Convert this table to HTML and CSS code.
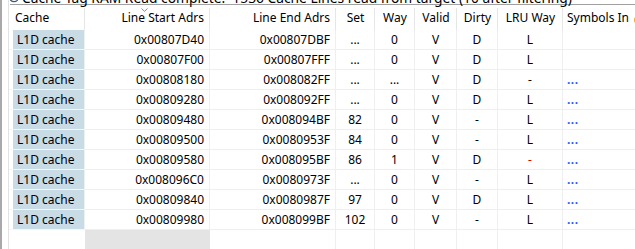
FILE: index.html
```html
<!DOCTYPE html>
<html>
<head>
<meta charset="utf-8">
<link rel="stylesheet" href="styles.css">
</head>
<body>
<div class="window">
  <div class="panel">
    <div class="msg">
      <svg class="msg-icon" width="10" height="15" viewBox="0 0 10 15"><circle cx="4" cy="8" r="4.6" fill="none" stroke="#3b5875" stroke-width="1.3"/></svg>
      <span class="msg-text">Cache Tag RAM Read complete.  1536 Cache Lines read from target (10 after filtering)</span>
    </div>
    <div class="grid">
      <div class="h left">Cache</div>
      <div class="h right sorted">Line Start Adrs<svg class="sort" width="7" height="4" viewBox="0 0 7 4"><path d="M0.5 0.5 L3.5 3.3 L6.5 0.5" fill="none" stroke="#8a8a8a" stroke-width="1"/></svg></div>
      <div class="h right">Line End Adrs</div>
      <div class="h center">Set</div>
      <div class="h center">Way</div>
      <div class="h center">Valid</div>
      <div class="h center">Dirty</div>
      <div class="h center">LRU Way</div>
      <div class="h left sym">Symbols In<span class="hint"></span></div>

      <div class="c tagc"><div class="tag">L1D cache</div></div><div class="c r">0x00807D40</div><div class="c r">0x00807DBF</div><div class="c m">...</div><div class="c m">0</div><div class="c m">V</div><div class="c m">D</div><div class="c m">L</div><div class="c s"></div>
      <div class="c tagc"><div class="tag">L1D cache</div></div><div class="c r">0x00807F00</div><div class="c r">0x00807FFF</div><div class="c m">...</div><div class="c m">0</div><div class="c m">V</div><div class="c m">D</div><div class="c m">L</div><div class="c s"></div>
      <div class="c tagc"><div class="tag">L1D cache</div></div><div class="c r">0x00808180</div><div class="c r">0x008082FF</div><div class="c m">...</div><div class="c m">...</div><div class="c m">V</div><div class="c m">D</div><div class="c m">-</div><div class="c s link">...</div>
      <div class="c tagc"><div class="tag">L1D cache</div></div><div class="c r">0x00809280</div><div class="c r">0x008092FF</div><div class="c m">...</div><div class="c m">0</div><div class="c m">V</div><div class="c m">D</div><div class="c m">L</div><div class="c s link">...</div>
      <div class="c tagc"><div class="tag">L1D cache</div></div><div class="c r">0x00809480</div><div class="c r">0x008094BF</div><div class="c m">82</div><div class="c m">0</div><div class="c m">V</div><div class="c m">-</div><div class="c m">L</div><div class="c s link">...</div>
      <div class="c tagc"><div class="tag">L1D cache</div></div><div class="c r">0x00809500</div><div class="c r">0x0080953F</div><div class="c m">84</div><div class="c m">0</div><div class="c m">V</div><div class="c m">-</div><div class="c m">L</div><div class="c s link">...</div>
      <div class="c tagc"><div class="tag">L1D cache</div></div><div class="c r">0x00809580</div><div class="c r">0x008095BF</div><div class="c m">86</div><div class="c m">1</div><div class="c m">V</div><div class="c m">D</div><div class="c m red">-</div><div class="c s link">...</div>
      <div class="c tagc"><div class="tag">L1D cache</div></div><div class="c r">0x008096C0</div><div class="c r">0x0080973F</div><div class="c m">...</div><div class="c m">0</div><div class="c m">V</div><div class="c m">-</div><div class="c m">L</div><div class="c s link">...</div>
      <div class="c tagc"><div class="tag">L1D cache</div></div><div class="c r">0x00809840</div><div class="c r">0x0080987F</div><div class="c m">97</div><div class="c m">0</div><div class="c m">V</div><div class="c m">D</div><div class="c m">L</div><div class="c s link">...</div>
      <div class="c tagc"><div class="tag">L1D cache</div></div><div class="c r">0x00809980</div><div class="c r">0x008099BF</div><div class="c m">102</div><div class="c m">0</div><div class="c m">V</div><div class="c m">-</div><div class="c m">L</div><div class="c s link">...</div>

      <div class="e blank"></div><div class="e shade"></div><div class="e"></div><div class="e"></div><div class="e"></div><div class="e"></div><div class="e"></div><div class="e"></div><div class="e"></div>
    </div>
  </div>
</div>
</body>
</html>
```

FILE: styles.css
```css
html, body {
  margin: 0;
  padding: 0;
  background: #ffffff;
}
body {
  width: 635px;
  height: 249px;
  overflow: hidden;
  font-family: "Noto Sans", "DejaVu Sans", sans-serif;
  font-size: 12px;
  color: #000000;
}
.window {
  display: flex;
  height: 249px;
  border-left: 2px solid #a9a9a9;
}
.panel {
  flex: 1;
  margin-left: 6px;
  border-left: 1px solid #e2e2e2;
  overflow: hidden;
}
.msg {
  display: flex;
  align-items: flex-start;
  margin-top: -11px;
  height: 15px;
  font-size: 13.8px;
  line-height: 18px;
  border-bottom: 1px solid #a0a0a0;
  white-space: pre;
  margin-left: 1px;
}
.msg-icon {
  flex: none;
  display: block;
}
.msg-text {
  margin-left: 2px;
}
.grid {
  display: grid;
  grid-template-columns: 76px 125px 126px 39px 40px 42px 41px 65px 140px;
  grid-template-rows: 25px;
  grid-auto-rows: 20px;
}
.h {
  box-sizing: border-box;
  padding-top: 3px;
  line-height: 20px;
  white-space: nowrap;
  overflow: hidden;
  background: linear-gradient(#e6e6e6, #e6e6e6) right bottom / 1px 22px no-repeat;
}
.h.left { padding-left: 6px; }
.h.right { text-align: right; padding-right: 6px; }
.h.center { text-align: center; }
.h.sym { padding-left: 4px; overflow: visible; }
.sorted { position: relative; }
.sort {
  position: absolute;
  left: 56px;
  top: 3px;
}
.hint {
  display: inline-block;
  width: 5px;
  height: 6px;
  margin-left: 5px;
  border-radius: 2px;
  background: #f2b04a;
  vertical-align: -1px;
}
.c {
  box-sizing: border-box;
  border-right: 1px solid #efefef;
  border-bottom: 1px solid #efefef;
  line-height: 19px;
  white-space: nowrap;
  overflow: hidden;
}
.c.r { text-align: right; padding-right: 5px; }
.c.m { text-align: center; }
.c.s { padding-left: 4px; }
.tagc {
  border-bottom-color: #f6f6f6;
}
.tag {
  margin-left: 4px;
  height: 19px;
  padding-left: 4px;
  background: #c9dbe5;
}
.link {
  color: #1f5fff;
  font-weight: bold;
  letter-spacing: 0.5px;
}
.red { color: #e00000; }
.e {
  border-right: 1px solid #efefef;
}
.e.blank { border-right: none; }
.e.shade {
  background: #e4e4e4;
  border-right: none;
}
```
